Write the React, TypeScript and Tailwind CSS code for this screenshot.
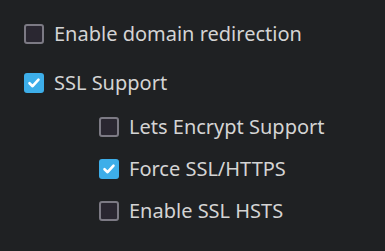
import React from "react";

function Box({ checked }: { checked: boolean }) {
  if (checked) {
    return (
      <div className="w-[20px] h-[20px] shrink-0 rounded-[3px] bg-[#3daee9] flex items-center justify-center">
        <svg width="14" height="14" viewBox="0 0 14 14">
          <path d="M2.5 7.2 L5.6 10.2 L11.5 3.6" fill="none" stroke="#ffffff" strokeWidth="2.6" strokeLinecap="round" strokeLinejoin="round" />
        </svg>
      </div>
    );
  }
  return <div className="w-[20px] h-[20px] shrink-0 rounded-[3px] border-2 border-[#7c7a84] bg-[#2a2731]" />;
}

function Row({ checked, label }: { checked: boolean; label: string }) {
  return (
    <div className="flex items-center gap-[10px] h-[20px]">
      <Box checked={checked} />
      <span className="text-[20px] leading-none text-[#d4d4d4] whitespace-nowrap">{label}</span>
    </div>
  );
}

export default function App() {
  return (
    <div
      className="w-[385px] h-[251px] bg-[#1f2123] pt-[24px] pl-[24px] flex flex-col"
      style={{ fontFamily: '"Noto Sans", sans-serif' }}
    >
      <Row checked={false} label="Enable domain redirection" />
      <div className="mt-[29px]">
        <Row checked={true} label="SSL Support" />
      </div>
      <div className="pl-[75px] mt-[24px] flex flex-col gap-[22px]">
        <Row checked={false} label="Lets Encrypt Support" />
        <Row checked={true} label="Force SSL/HTTPS" />
        <Row checked={false} label="Enable SSL HSTS" />
      </div>
    </div>
  );
}
